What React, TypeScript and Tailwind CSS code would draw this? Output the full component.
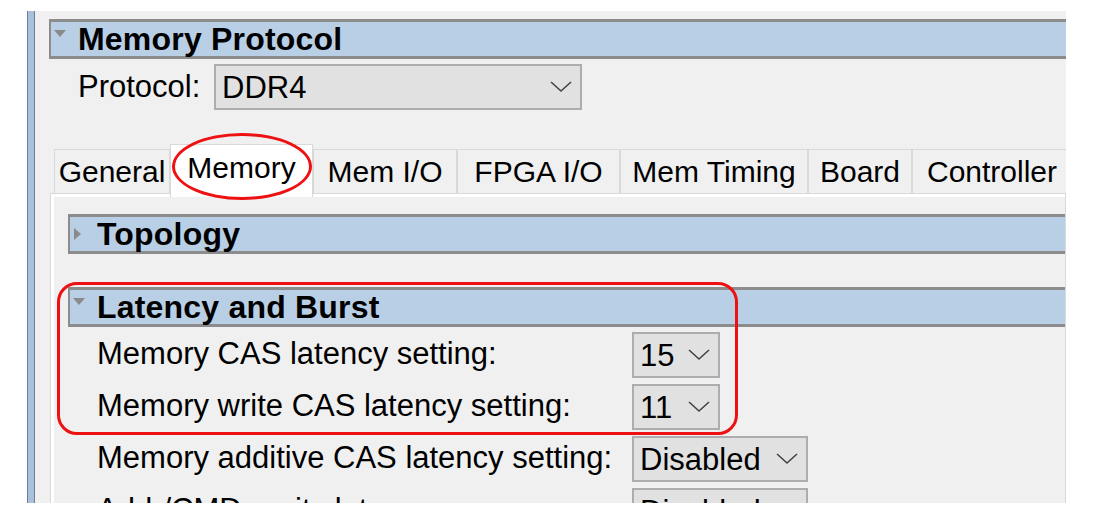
import React from "react";

const font = { fontFamily: '"Liberation Sans", Arial, sans-serif' };

function Chevron() {
  return (
    <svg width="22" height="12" viewBox="0 0 22 12" className="shrink-0">
      <polyline points="1,1 11,10 21,1" fill="none" stroke="#444" strokeWidth="1.6" />
    </svg>
  );
}

function Combo({ value, w }: { value: string; w: string }) {
  return (
    <div
      className={`flex h-[46px] ${w} items-center justify-between border-2 border-[#adadad] bg-[#e1e1e1] pl-[6px] pr-[8px] text-[31px] leading-none text-black`}
    >
      <span>{value}</span>
      <Chevron />
    </div>
  );
}

function SectionBar({ title, open, className = "" }: { title: string; open: boolean; className?: string }) {
  return (
    <div
      className={`flex h-[40px] items-center border-y-[3px] border-l-2 border-[#8c8c8c] bg-[#b9cfe5] ${className}`}
    >
      {open ? (
        <svg width="12" height="8" viewBox="0 0 12 8" className="ml-[3px] mr-[12px] -mt-[10px] shrink-0">
          <polygon points="0,0 12,0 6,7" fill="#8a8a8a" />
        </svg>
      ) : (
        <svg width="7" height="12" viewBox="0 0 7 12" className="ml-[4px] mr-[16px] shrink-0">
          <polygon points="0,0 7,6 0,12" fill="#8a8a8a" />
        </svg>
      )}
      <span className="text-[32px] font-bold leading-none tracking-[0.2px] text-black">{title}</span>
    </div>
  );
}

const tabs = [
  { label: "General", w: "w-[116px]" },
  { label: "Memory", w: "w-[143px]", active: true },
  { label: "Mem I/O", w: "w-[144px]" },
  { label: "FPGA I/O", w: "w-[163px]" },
  { label: "Mem Timing", w: "w-[188px]" },
  { label: "Board", w: "w-[104px]" },
  { label: "Controller", w: "w-[160px]" },
];

const rows = [
  { label: "Memory CAS latency setting:", value: "15", w: "w-[88px]" },
  { label: "Memory write CAS latency setting:", value: "11", w: "w-[88px]" },
  { label: "Memory additive CAS latency setting:", value: "Disabled", w: "w-[176px]" },
  { label: "Addr/CMD parity latency:", value: "Disabled", w: "w-[176px]" },
];

export default function App() {
  return (
    <div className="relative h-[523px] w-[1094px] overflow-hidden bg-white pl-[27px] pt-[11px]" style={font}>
      <div className="flex h-[492px] w-[1039px] overflow-hidden bg-[#f0f0f0]">
        <div className="h-full w-[8px] shrink-0 border-x border-[#6f7f92] bg-[#a8c0dc]" />
        <div className="min-w-0 flex-1 pl-[14px] pt-[8px]">
          <SectionBar title="Memory Protocol" open className="h-[39px]" />

          <div className="mt-[5px] flex items-center">
            <span className="ml-[29px] w-[136px] pb-[2px] text-[31px] leading-none text-black">Protocol:</span>
            <Combo value="DDR4" w="w-[368px]" />
          </div>

          <div className="mt-[34px] flex h-[49px] items-end pl-[5px]">
            {tabs.map((t) =>
              t.active ? (
                <div
                  key={t.label}
                  className={`relative z-10 -mb-[4px] flex h-[53px] ${t.w} shrink-0 items-center justify-center border-x border-t border-[#d9d9d9] bg-white pb-[6px] text-[30px] leading-none text-black`}
                >
                  {t.label}
                </div>
              ) : (
                <div
                  key={t.label}
                  className={`flex h-[44px] ${t.w} shrink-0 items-center justify-center whitespace-nowrap border-x border-t border-[#d9d9d9] bg-[#f0f0f0] text-[30px] leading-none text-black`}
                >
                  {t.label}
                </div>
              )
            )}
          </div>

          <div className="ml-px border border-[#d9d9d9]">
            <div className="border-[3px] border-r-0 border-white bg-[#f0f0f0] pl-[14px] pt-[17px]">
              <SectionBar title="Topology" open={false} />
              <SectionBar title="Latency and Burst" open className="mt-[33px]" />
              <div className="mt-[5px] grid grid-cols-[564px_auto] gap-y-[6px]">
                {rows.map((r) => (
                  <React.Fragment key={r.label}>
                    <div className="flex h-[46px] items-center pb-[4px] pl-[29px] text-[31px] leading-none text-black">
                      {r.label}
                    </div>
                    <div>
                      <Combo value={r.value} w={r.w} />
                    </div>
                  </React.Fragment>
                ))}
              </div>
            </div>
          </div>
        </div>
      </div>

      {/* red annotation marks drawn over the dialog */}
      <div className="pointer-events-none absolute left-[172px] top-[133px] z-20 h-[67px] w-[140px] rounded-[50%] border-[3px] border-[#ee1111]" />
      <div className="pointer-events-none absolute left-[57px] top-[282px] z-20 h-[153px] w-[681px] rounded-[20px] border-[3px] border-[#ee1111]" />
    </div>
  );
}
